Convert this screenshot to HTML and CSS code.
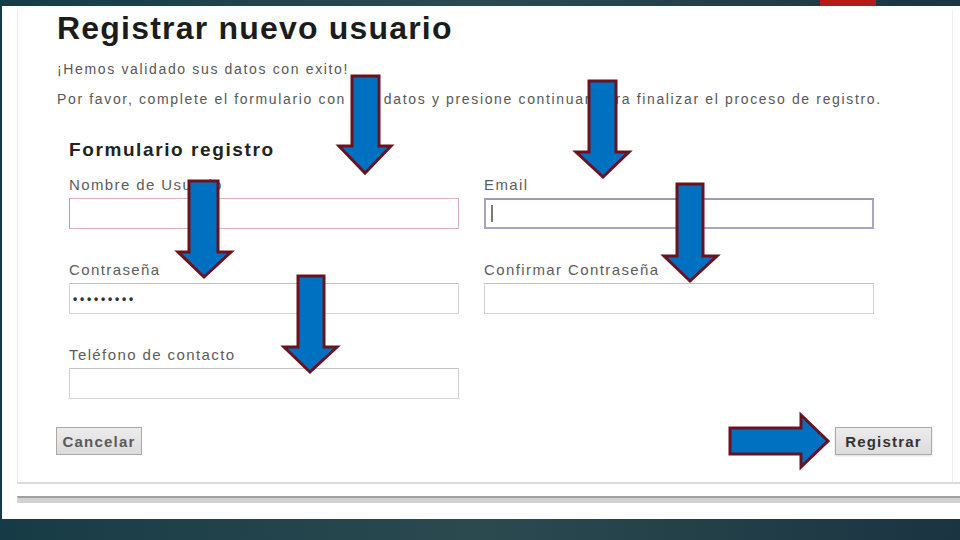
FILE: index.html
```html
<!DOCTYPE html>
<html lang="es">
<head>
    <meta charset="UTF-8">
    <meta name="viewport" content="width=device-width, initial-scale=1.0">
    <title>Registrar nuevo usuario</title>
    <link rel="stylesheet" href="styles.css">
</head>
<body>
    <div class="slide">
        <div class="accent"></div>
        <div class="sheet">
            <div class="panel">
                <h1 class="title">Registrar nuevo usuario</h1>
                <p class="note note-first">¡Hemos validado sus datos con exito!</p>
                <p class="note">Por favor, complete el formulario con sus datos y presione continuar para finalizar el proceso de registro.</p>
                <form class="register-form">
                    <h2>Formulario registro</h2>
                    <div class="fields">
                        <div class="field">
                            <label>Nombre de Usuario</label>
                            <input class="input input-user" type="text">
                        </div>
                        <div class="field">
                            <label>Email</label>
                            <div class="input-wrap">
                                <input class="input input-email" type="text">
                                <span class="caret"></span>
                            </div>
                        </div>
                        <div class="field">
                            <label>Contraseña</label>
                            <input class="input input-pass" type="password" value="secreto12">
                        </div>
                        <div class="field">
                            <label>Confirmar Contraseña</label>
                            <input class="input" type="password">
                        </div>
                        <div class="field">
                            <label>Teléfono de contacto</label>
                            <input class="input" type="text">
                        </div>
                    </div>
                    <div class="actions">
                        <button type="button" class="btn btn-cancel">Cancelar</button>
                        <button type="submit" class="btn btn-submit">Registrar</button>
                    </div>
                </form>
            </div>
            <div class="divider"></div>
            <div class="footer-bar"></div>
        </div>

        <!-- callout arrows pasted over the screenshot -->
        <svg class="arrows" width="960" height="540" viewBox="0 0 960 540">
            <g fill="#0070c0" stroke="#6b1220" stroke-width="3" stroke-linejoin="miter">
                <polygon points="352,76 379,76 379,146 391,146 365,173 339,146 352,146"/>
                <polygon points="589,81 616,81 616,152 629,152 603,177 576,152 589,152"/>
                <polygon points="189,181 218,181 218,252 231,252 204,277 178,252 189,252"/>
                <polygon points="677,184 703,184 703,256 717,256 690,281 664,256 677,256"/>
                <polygon points="298,276 324,276 324,347 337,347 310,372 284,347 298,347"/>
                <polygon points="730,428 801,428 801,415 828,441 801,467 801,454 730,454"/>
            </g>
        </svg>
    </div>
</body>
</html>
```

FILE: styles.css
```css
html, body {
    margin: 0;
    padding: 0;
}
body {
    width: 960px;
    height: 540px;
    overflow: hidden;
    font-family: "Liberation Sans", Arial, sans-serif;
    background: linear-gradient(90deg, #173b46 0%, #2b4a50 50%, #1a3441 100%);
}
.slide {
    position: relative;
    width: 960px;
    height: 540px;
    padding: 6px 0 0 2px;
    box-sizing: border-box;
}
.accent {
    position: absolute;
    top: 0;
    left: 820px;
    width: 56px;
    height: 6px;
    background-color: #b11b1b;
}
.sheet {
    height: 513px;
    background: #fff;
    padding-top: 4px;
    box-sizing: border-box;
}
.panel {
    margin-left: 15px;
    width: 936px;
    height: 472px;
    box-sizing: border-box;
    padding: 0 20px 0 38px;
    border-left: 1px solid #ececec;
    border-right: 1px solid #efefef;
}
.title {
    margin: 0 0 14px 1px;
    font-size: 32px;
    line-height: 36px;
    letter-spacing: 1.2px;
    font-weight: bold;
    color: #1c1c1c;
}
.note {
    margin: 0 0 0 1px;
    font-size: 14px;
    line-height: 18px;
    letter-spacing: 1.65px;
    color: #575757;
}
.note-first {
    margin-bottom: 12px;
}
.register-form {
    margin-top: 31px;
}
.register-form h2 {
    margin: 0 0 15px 13px;
    font-size: 19px;
    line-height: 22px;
    letter-spacing: 1.6px;
    font-weight: bold;
    color: #222;
}
.fields {
    margin-left: 13px;
    display: grid;
    grid-template-columns: 390px 390px;
    column-gap: 25px;
    row-gap: 32px;
}
.field label {
    display: block;
    margin-bottom: 4px;
    font-size: 15px;
    line-height: 18px;
    letter-spacing: 1.4px;
    color: #5c5c5c;
}
.input {
    display: block;
    width: 390px;
    height: 31px;
    margin: 0;
    padding: 0 3px;
    box-sizing: border-box;
    border: 1px solid #d4d4d4;
    border-top-color: #c4c4c4;
    background: #fff;
    font-family: "Liberation Sans", Arial, sans-serif;
    font-size: 14px;
    color: #222;
    outline: none;
}
.input-user {
    border-color: #dcb0c0;
    border-left-color: #c995aa;
}
.input-email {
    border: 2px solid #a6a6c4;
    border-top-color: #9a9aba;
}
.input-pass {
    font-size: 12px;
    letter-spacing: 2.8px;
    font-weight: bold;
    color: #333;
}
.input-wrap {
    position: relative;
}
.caret {
    position: absolute;
    left: 7px;
    top: 7px;
    width: 2px;
    height: 17px;
    background-color: #7a7a7a;
}
.actions {
    display: flex;
    justify-content: space-between;
    margin-top: 28px;
}
.btn {
    height: 28px;
    padding: 0;
    border: 1px solid #a9a9a9;
    background: linear-gradient(#ececec, #dcdcdc);
    font-family: "Liberation Sans", Arial, sans-serif;
    font-size: 15px;
    font-weight: bold;
    letter-spacing: 1.2px;
    cursor: pointer;
}
.btn-cancel {
    width: 86px;
    color: #5a5a5a;
}
.btn-submit {
    width: 97px;
    color: #333;
    box-shadow: 0 1px 2px rgba(0, 0, 0, 0.15);
}
.divider {
    margin-left: 15px;
    height: 2px;
    background-color: #dcdcdc;
}
.footer-bar {
    margin: 12px 0 0 15px;
    height: 5px;
    border-top: 2px solid #a0a0a0;
    background-color: #d2d2d2;
    border-left: 1px solid #ddd;
}
.arrows {
    position: absolute;
    top: 0;
    left: 0;
    pointer-events: none;
}
```
